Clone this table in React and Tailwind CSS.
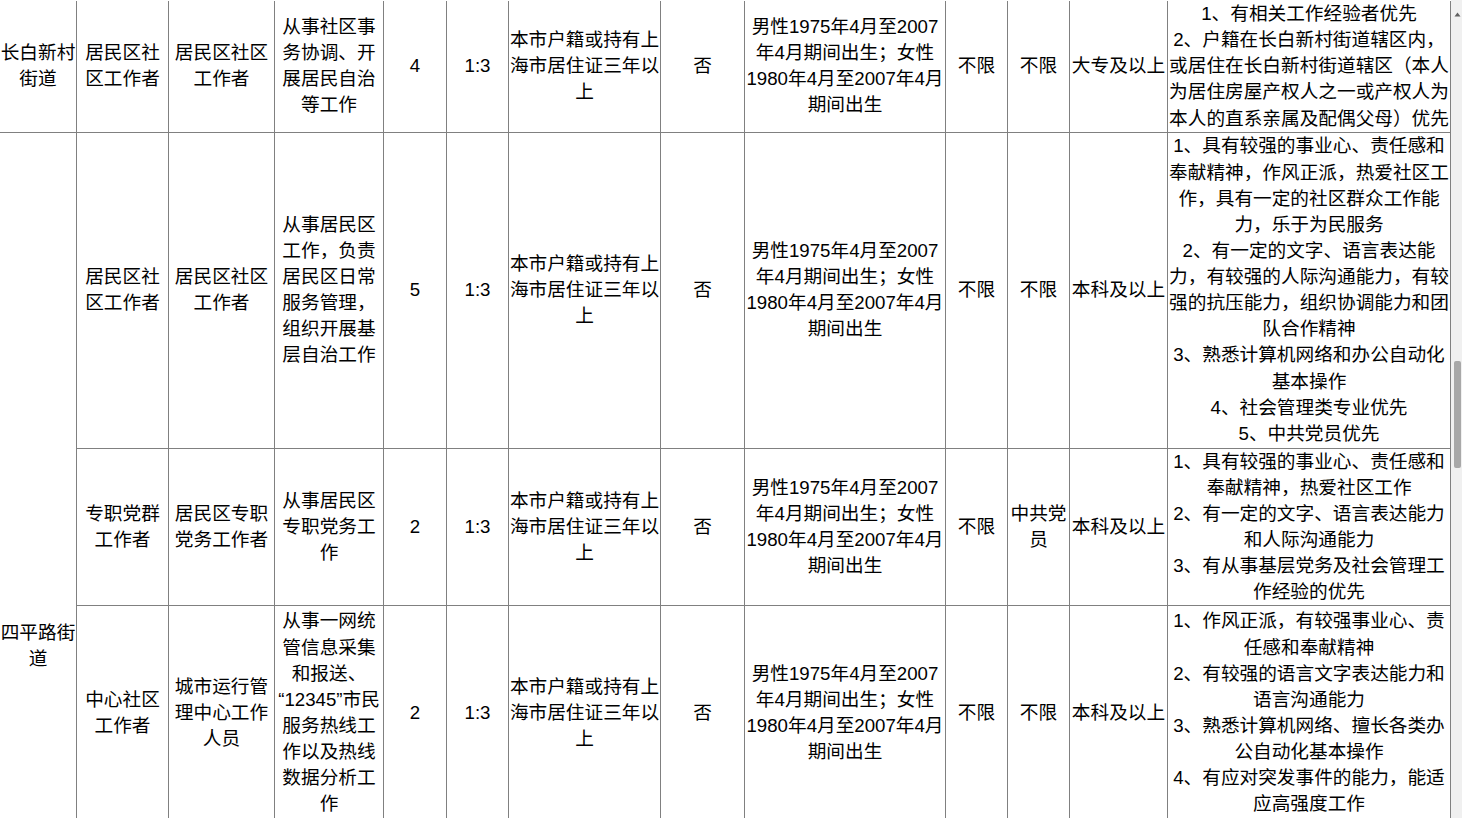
import React from 'react';

const COLS = [77, 92, 106, 109, 63, 62, 152, 84, 201, 62, 62, 98, 283];

const HUJI = '本市户籍或持有上海市居住证三年以上';
const AGE = '男性1975年4月至2007年4月期间出生；女性1980年4月至2007年4月期间出生';

const ROWS = [
  {
    post: '居民区社区工作者',
    job: '居民区社区工作者',
    duty: '从事居民区工作，负责居民区日常服务管理，组织开展基层自治工作',
    num: '5',
    ratio: '1:3',
    party: '不限',
    edu: '本科及以上',
    reqs: [
      '1、具有较强的事业心、责任感和奉献精神，作风正派，热爱社区工作，具有一定的社区群众工作能力，乐于为民服务',
      '2、有一定的文字、语言表达能力，有较强的人际沟通能力，有较强的抗压能力，组织协调能力和团队合作精神',
      '3、熟悉计算机网络和办公自动化基本操作',
      '4、社会管理类专业优先',
      '5、中共党员优先',
    ],
  },
  {
    post: '专职党群工作者',
    job: '居民区专职党务工作者',
    duty: '从事居民区专职党务工作',
    num: '2',
    ratio: '1:3',
    party: '中共党员',
    edu: '本科及以上',
    reqs: [
      '1、具有较强的事业心、责任感和奉献精神，热爱社区工作',
      '2、有一定的文字、语言表达能力和人际沟通能力',
      '3、有从事基层党务及社会管理工作经验的优先',
    ],
  },
  {
    post: '中心社区工作者',
    job: '城市运行管理中心工作人员',
    // zero-width space so the line may break before the opening quote
    duty: '从事一网统管信息采集和报送、\u200B“12345”市民服务热线工作以及热线数据分析工作',
    num: '2',
    ratio: '1:3',
    party: '不限',
    edu: '本科及以上',
    reqs: [
      '1、作风正派，有较强事业心、责任感和奉献精神',
      '2、有较强的语言文字表达能力和语言沟通能力',
      '3、熟悉计算机网络、擅长各类办公自动化基本操作',
      '4、有应对突发事件的能力，能适应高强度工作',
    ],
    tall: true,
  },
];

const Td = ({ children, className = '', ...rest }) => (
  <td className={`border border-[#808080] p-0 text-center align-middle ${className}`} {...rest}>
    {children}
  </td>
);

const Reqs = ({ items }) => (
  <>
    {items.map((r, i) => (
      <div key={i}>{r}</div>
    ))}
  </>
);

const RowCells = ({ row }) => (
  <>
    <Td>{row.post}</Td>
    <Td>{row.job}</Td>
    <Td>{row.duty}</Td>
    <Td>{row.num}</Td>
    <Td>{row.ratio}</Td>
    <Td>{HUJI}</Td>
    <Td>否</Td>
    <Td>{AGE}</Td>
    <Td>不限</Td>
    <Td>{row.party}</Td>
    <Td>{row.edu}</Td>
    <Td>
      <Reqs items={row.reqs} />
    </Td>
  </>
);

const Scrollbar = () => (
  <div className="w-[11px] h-full bg-[#f0f0f0] flex flex-col items-center pl-[3px] pr-[1px] shrink-0">
    <svg width="7" height="5" viewBox="0 0 7 5" className="mt-[12px]">
      <path d="M3.5 0.5 L6.5 4.5 L0.5 4.5 Z" fill="#606060" />
    </svg>
    <div className="mt-[344px] w-[7px] h-[107px] bg-[#a8a8a8] rounded-[2px]" />
  </div>
);

export default function App() {
  return (
    <div className="w-[1462px] h-[818px] flex bg-white overflow-hidden">
      <div className="flex-1 min-w-0 h-full overflow-hidden pt-px">
        <table className="table-fixed border-collapse w-[1452px] ml-[-1px] text-black text-[18.67px] leading-[26.13px] font-['Liberation_Sans','Noto_Sans_CJK_SC',sans-serif]">
          <colgroup>
            {COLS.map((w, i) => (
              <col key={i} style={{ width: w }} />
            ))}
          </colgroup>
          <tbody>
            <tr className="[&>td]:border-t-0">
              <Td>长白新村街道</Td>
              <Td>居民区社区工作者</Td>
              <Td>居民区社区工作者</Td>
              <Td>从事社区事务协调、开展居民自治等工作</Td>
              <Td>4</Td>
              <Td>1:3</Td>
              <Td>{HUJI}</Td>
              <Td>否</Td>
              <Td>{AGE}</Td>
              <Td>不限</Td>
              <Td>不限</Td>
              <Td>大专及以上</Td>
              <Td>
                <Reqs
                  items={[
                    '1、有相关工作经验者优先',
                    '2、户籍在长白新村街道辖区内，或居住在长白新村街道辖区（本人为居住房屋产权人之一或产权人为本人的直系亲属及配偶父母）优先',
                  ]}
                />
              </Td>
            </tr>
            <tr className="h-[316px]">
              <Td rowSpan={4}>四平路街道</Td>
              <RowCells row={ROWS[0]} />
            </tr>
            <tr>
              <RowCells row={ROWS[1]} />
            </tr>
            <tr className="h-[214px]">
              <RowCells row={ROWS[2]} />
            </tr>
            <tr className="h-[340px]">
              {COLS.slice(1).map((w, i) => (
                <Td key={i} />
              ))}
            </tr>
          </tbody>
        </table>
      </div>
      <Scrollbar />
    </div>
  );
}
